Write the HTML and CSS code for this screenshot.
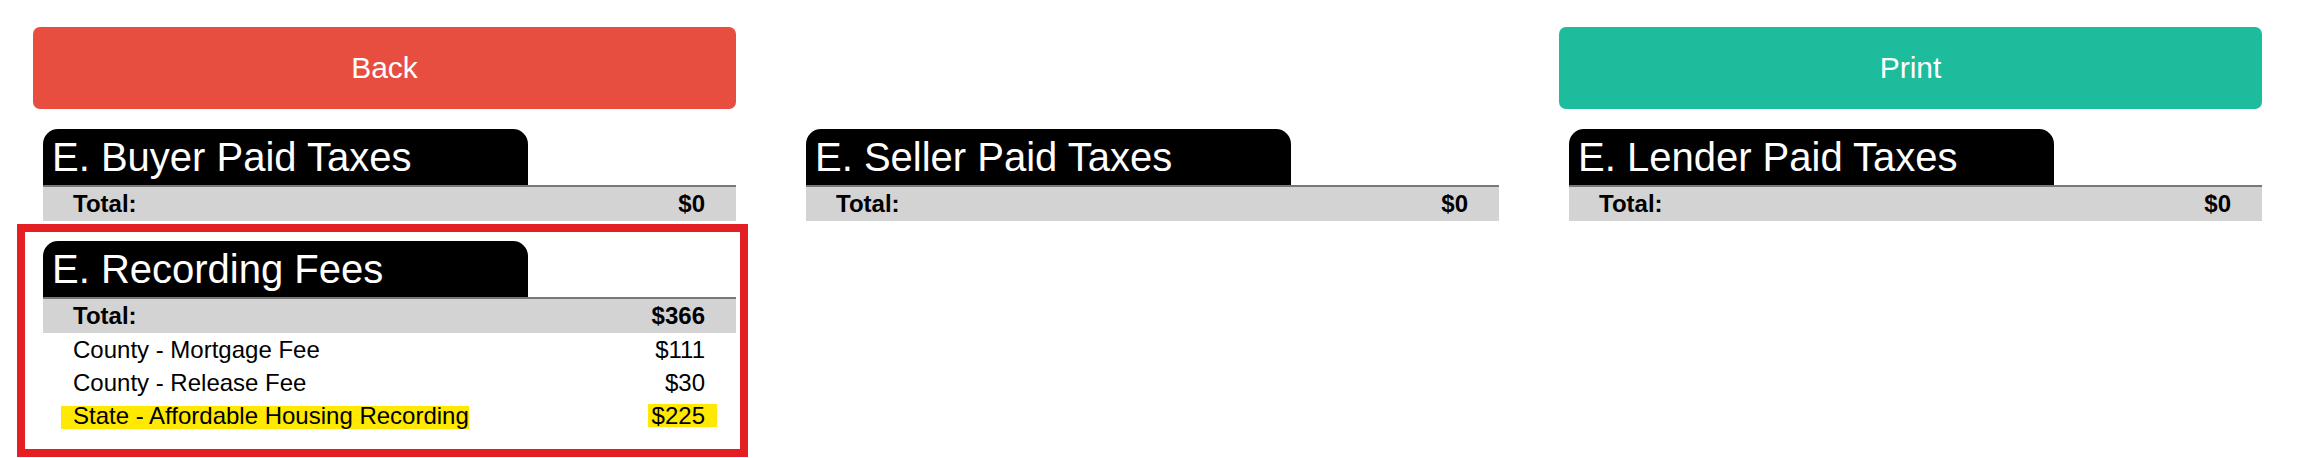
FILE: index.html
```html
<!DOCTYPE html>
<html lang="en">
<head>
<meta charset="utf-8">
<title>Fees</title>
<link rel="stylesheet" href="styles.css">
</head>
<body>
<div class="page">
  <div class="actions">
    <button class="btn btn-back" type="button">Back</button>
    <div class="btn-gap"></div>
    <button class="btn btn-print" type="button">Print</button>
  </div>
  <div class="columns">
    <div class="col">
      <section class="fees">
        <div class="tab">E. Buyer Paid Taxes</div>
        <div class="rows">
          <div class="row total"><span>Total:</span><span>$0</span></div>
        </div>
      </section>
      <div class="marked">
        <section class="fees">
          <div class="tab">E. Recording Fees</div>
          <div class="rows">
            <div class="row total"><span>Total:</span><span>$366</span></div>
            <div class="row"><span>County - Mortgage Fee</span><span>$111</span></div>
            <div class="row"><span>County - Release Fee</span><span>$30</span></div>
            <div class="row"><span class="hl hl-left">State - Affordable Housing Recording</span><span class="hl hl-right">$225</span></div>
          </div>
        </section>
      </div>
    </div>
    <div class="col">
      <section class="fees">
        <div class="tab">E. Seller Paid Taxes</div>
        <div class="rows">
          <div class="row total"><span>Total:</span><span>$0</span></div>
        </div>
      </section>
    </div>
    <div class="col">
      <section class="fees">
        <div class="tab">E. Lender Paid Taxes</div>
        <div class="rows">
          <div class="row total"><span>Total:</span><span>$0</span></div>
        </div>
      </section>
    </div>
  </div>
</div>
</body>
</html>
```
FILE: styles.css
```css
* {
  box-sizing: border-box;
}

html, body {
  margin: 0;
  padding: 0;
  background: #ffffff;
}

body {
  font-family: "Liberation Sans", Arial, sans-serif;
  color: #000000;
}

.page {
  padding: 27px 0 1px 33px;
}

.actions,
.columns {
  display: grid;
  grid-template-columns: repeat(3, 703px);
  column-gap: 60px;
}

.btn {
  height: 82px;
  border: 0;
  border-radius: 7px;
  color: #ffffff;
  font-family: "Liberation Sans", Arial, sans-serif;
  font-size: 30px;
  padding: 0;
  display: flex;
  align-items: center;
  justify-content: center;
}

.btn-back {
  background: #e84e3f;
}

.btn-print {
  background: #1cbc9c;
}

.columns {
  margin-top: 20px;
  align-items: start;
}

.col {
  display: flex;
  flex-direction: column;
  gap: 20px;
}

.fees {
  margin-left: 10px;
}

.tab {
  width: 70%;
  height: 56px;
  background: #000000;
  color: #ffffff;
  font-size: 40px;
  line-height: 56px;
  padding-left: 9px;
  border-radius: 15px 15px 0 0;
  white-space: nowrap;
}

.rows {
  border-top: 2px solid #787878;
}

.row {
  display: flex;
  justify-content: space-between;
  padding: 0 31px 0 30px;
  font-size: 24px;
  line-height: 33px;
  white-space: nowrap;
}

.row.total {
  background: #d3d3d3;
  font-weight: bold;
  line-height: 34px;
}

/* red annotation frame drawn around the recording fees block */
.marked {
  margin: -17px -12px 0 -16px;
  border: 8px solid #e41f23;
  padding: 9px 4px 17px 8px;
}

.hl {
  background-image: linear-gradient(#ffe900, #ffe900);
  background-repeat: no-repeat;
}

.hl-left {
  margin-left: -12px;
  padding-left: 12px;
  background-size: 100% 23px;
  background-position: 0 7px;
}

.hl-right {
  margin-right: -12px;
  padding-right: 12px;
  padding-left: 4px;
  background-size: 100% 23px;
  background-position: 0 5px;
}
```
